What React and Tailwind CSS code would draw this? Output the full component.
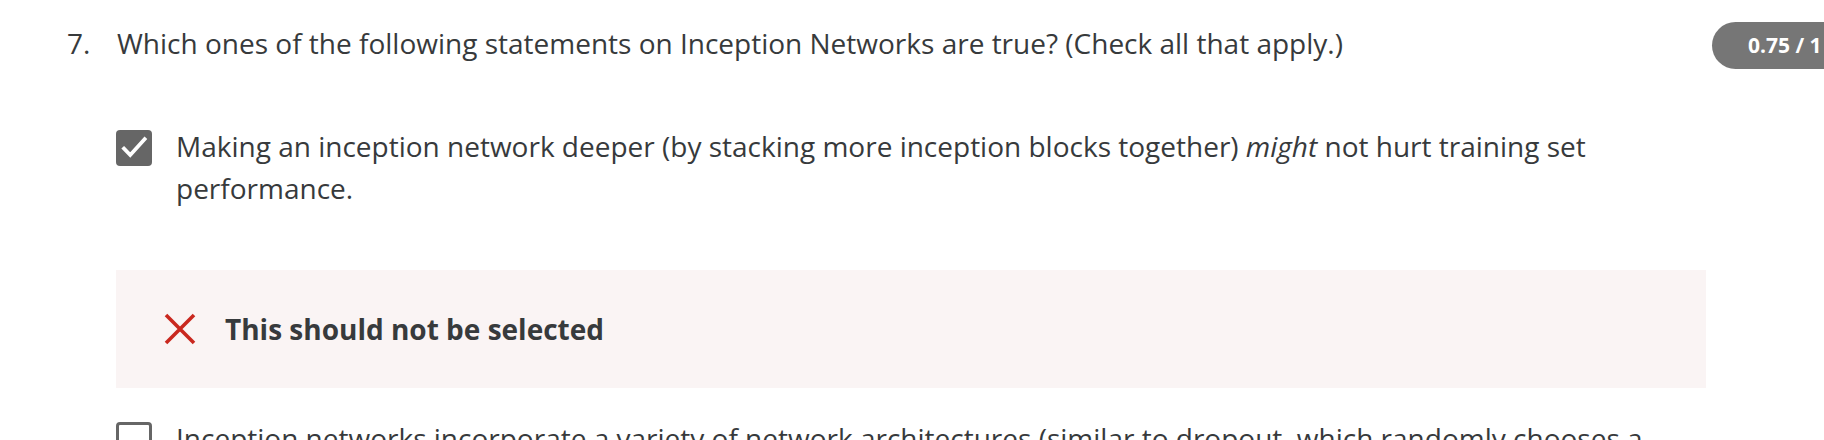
export default function App() {
  return (
    <div className="relative w-[1824px] h-[440px] overflow-hidden bg-white font-['Open_Sans',sans-serif] text-[#373a3c]">
      {/* question header */}
      <div className="flex items-start mt-[22px] h-[47px] w-[2000px]">
        <div className="flex w-[1712px] shrink-0 pt-[1px] pl-[67px] text-[28px] leading-[40px]">
          <span className="w-[50px] shrink-0">7.</span>
          <span>Which ones of the following statements on Inception Networks are true? (Check all that apply.)</span>
        </div>
        <div className="shrink-0 h-[47px] flex items-center rounded-full bg-[#767676] px-[36px] text-white font-bold text-[21px]">
          0.75 / 1 point
        </div>
      </div>

      <div className="pl-[116px] w-[1706px]">
        {/* option 1 */}
        <div className="flex items-start mt-[56px]">
          <div className="mt-[5px] w-[36px] h-[36px] shrink-0 rounded-[4px] bg-[#666666] flex items-center justify-center">
            <svg width="30" height="30" viewBox="0 0 24 24" fill="none" stroke="white" strokeWidth="3" strokeLinecap="square">
              <path d="M4 12.5l5 5.2L20.5 5" />
            </svg>
          </div>
          <p className="ml-[24px] text-[28px] leading-[42px]">
            Making an inception network deeper (by stacking more inception blocks together) <em>might</em> not hurt training set performance.
          </p>
        </div>

        {/* feedback */}
        <div className="mt-[61px] h-[118px] bg-[#faf4f4] flex items-center pl-[48px]">
          <svg width="32" height="32" viewBox="0 0 32 32" fill="none" stroke="#c9281f" strokeWidth="3.6">
            <path d="M2 2l28 28M30 2L2 30" />
          </svg>
          <span className="ml-[29px] font-bold text-[28px]">This should not be selected</span>
        </div>

        {/* option 2 */}
        <div className="flex items-start mt-[29px]">
          <div className="mt-[5px] w-[36px] h-[36px] shrink-0 rounded-[4px] border-[3px] border-[#666666] bg-white" />
          <p className="ml-[24px] text-[28px] leading-[42px]">
            Inception networks incorporate a variety of network architectures (similar to dropout, which randomly chooses a network architecture on each step) and thus has a similar regularizing effect as dropout.
          </p>
        </div>
      </div>
    </div>
  );
}
